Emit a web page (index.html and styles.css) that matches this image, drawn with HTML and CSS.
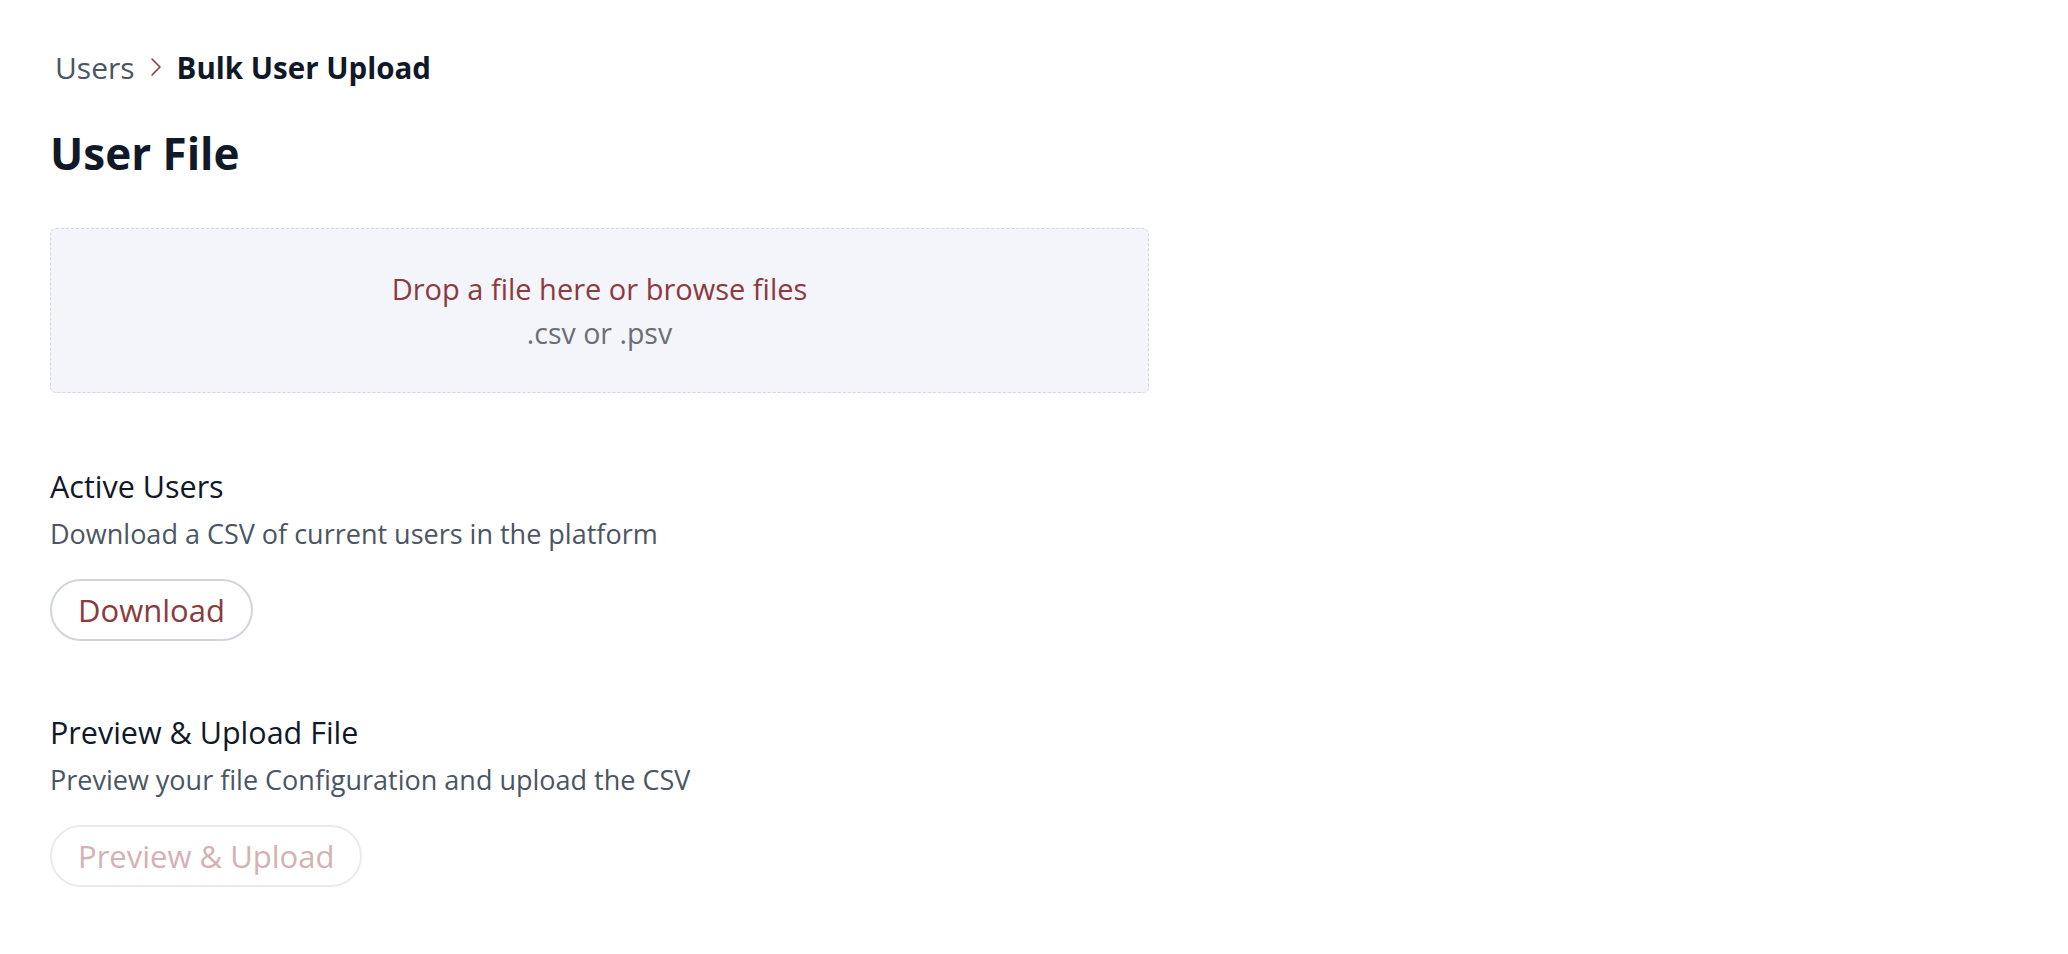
FILE: index.html
```html
<!DOCTYPE html>
<html lang="en">
<head>
<meta charset="utf-8">
<title>Bulk User Upload</title>
<link rel="stylesheet" href="styles.css">
</head>
<body>
<main class="page">
  <nav class="crumbs">
    <span class="crumb-link">Users</span>
    <svg class="crumb-sep" width="12" height="20" viewBox="0 0 12 20"><path d="M2 2 L10 10 L2 18" fill="none" stroke="#8b3a3e" stroke-width="1.6" stroke-linecap="round" stroke-linejoin="round"/></svg>
    <span class="crumb-current">Bulk User Upload</span>
  </nav>
  <h1 class="title">User File</h1>
  <div class="dropzone">
    <div class="drop-main">Drop a file here or browse files</div>
    <div class="drop-sub">.csv or .psv</div>
  </div>
  <section class="block">
    <h2 class="block-title">Active Users</h2>
    <p class="block-desc">Download a CSV of current users in the platform</p>
    <button class="btn">Download</button>
  </section>
  <section class="block">
    <h2 class="block-title">Preview &amp; Upload File</h2>
    <p class="block-desc">Preview your file Configuration and upload the CSV</p>
    <button class="btn btn-disabled" disabled>Preview &amp; Upload</button>
  </section>
</main>
</body>
</html>
```
FILE: styles.css
```css
* { box-sizing: border-box; }
html, body { margin: 0; padding: 0; background: #ffffff; }
body { font-family: "Open Sans", Lato, sans-serif; color: #111827; }
.page { padding: 50px 50px; }
.crumbs { display: flex; align-items: center; gap: 15px; padding-left: 5px; height: 34px; font-size: 29.5px; }
.crumb-link { color: #4b5563; font-size: 30px; }
.crumb-sep { display: block; }
.crumb-current { font-weight: 700; color: #111827; }
.title { margin: 47px 0 0; font-size: 44px; font-weight: 700; line-height: 44px; color: #111827; }
.dropzone { margin-top: 53px; width: 1099px; height: 165px; background: #f4f5fa; border: 1.5px dashed #d3d6e2; border-radius: 6px; display: flex; flex-direction: column; align-items: center; justify-content: center; gap: 14px; }
.drop-main { color: #8b3a3e; font-size: 29px; line-height: 30px; }
.drop-sub { color: #6b6e75; font-size: 28.5px; line-height: 30px; }
.block { margin-top: 76px; }
.block + .block { margin-top: 74px; }
.block-title { margin: 0; font-size: 30.5px; font-weight: 400; line-height: 34px; color: #111827; }
.block-desc { margin: 16px 0 0; font-size: 27px; line-height: 30px; color: #4b5563; }
.btn { margin-top: 30px; height: 62px; padding: 0 26px; border-radius: 31px; background: #fff; border: 2px solid #d1d5db; color: #8b3a3e; font-family: inherit; font-size: 31px; }
.btn-disabled { color: #d4b1b3; border-color: #eceaf0; }
```
